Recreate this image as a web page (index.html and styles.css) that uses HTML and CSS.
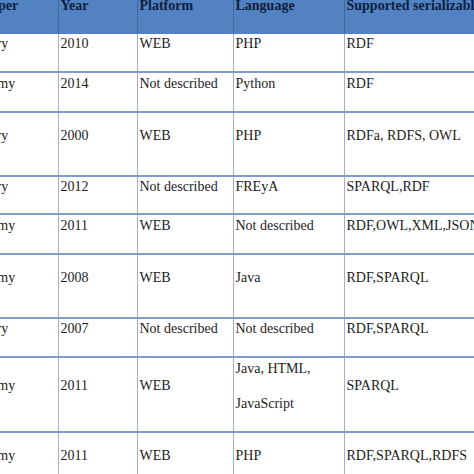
FILE: index.html
```html
<!DOCTYPE html>
<html>
<head>
<meta charset="utf-8">
<link rel="stylesheet" href="styles.css">
</head>
<body>
<table class="tbl">
  <colgroup>
    <col class="c1"><col class="c2"><col class="c3"><col class="c4"><col class="c5">
  </colgroup>
  <thead>
    <tr class="head">
      <th class="first"><p>Developer</p></th>
      <th><p>Year</p></th>
      <th><p>Platform</p></th>
      <th><p>Language</p></th>
      <th><p>Supported serializable formats</p></th>
    </tr>
  </thead>
  <tbody>
    <tr class="h38"><td><p>Industry</p></td><td><p>2010</p></td><td><p>WEB</p></td><td><p>PHP</p></td><td><p>RDF</p></td></tr>
    <tr class="h40"><td><p>Academy</p></td><td><p>2014</p></td><td><p>Not described</p></td><td><p>Python</p></td><td><p>RDF</p></td></tr>
    <tr class="h64"><td><p>Industry</p></td><td><p>2000</p></td><td><p>WEB</p></td><td><p>PHP</p></td><td><p>RDFa, RDFS, OWL</p></td></tr>
    <tr class="h38"><td><p>Industry</p></td><td><p>2012</p></td><td><p>Not described</p></td><td><p>FREyA</p></td><td><p>SPARQL,RDF</p></td></tr>
    <tr class="h40"><td><p>Academy</p></td><td><p>2011</p></td><td><p>WEB</p></td><td><p>Not described</p></td><td><p>RDF,OWL,XML,JSON</p></td></tr>
    <tr class="h64"><td><p>Academy</p></td><td><p>2008</p></td><td><p>WEB</p></td><td><p>Java</p></td><td><p>RDF,SPARQL</p></td></tr>
    <tr class="h39"><td><p>Industry</p></td><td><p>2007</p></td><td><p>Not described</p></td><td><p>Not described</p></td><td><p>RDF,SPARQL</p></td></tr>
    <tr class="h75"><td><p>Academy</p></td><td><p>2011</p></td><td><p>WEB</p></td><td><p>Java, HTML,</p><p>JavaScript</p></td><td><p>SPARQL</p></td></tr>
    <tr class="h64"><td><p>Academy</p></td><td><p>2011</p></td><td><p>WEB</p></td><td><p>PHP</p></td><td><p>RDF,SPARQL,RDFS</p></td></tr>
  </tbody>
</table>
</body>
</html>
```

FILE: styles.css
```css
html, body {
  margin: 0;
  padding: 0;
  overflow: hidden;
  background: #ffffff;
  width: 474px;
  height: 474px;
}

.tbl {
  border-collapse: collapse;
  table-layout: fixed;
  width: 585px;
  margin-left: -41px;
  margin-top: -6px;
  font-family: "Liberation Serif", "Times New Roman", serif;
  font-size: 14px;
  color: #1c1c1c;
}

.c1 { width: 99px; }
.c2 { width: 79px; }
.c3 { width: 96px; }
.c4 { width: 111px; }
.c5 { width: 200px; }

.tbl p {
  margin: 0 0 18px 0;
  line-height: 17px;
  white-space: nowrap;
}

.tbl th,
.tbl td {
  padding: 0 0 0 1.5px;
  text-align: left;
  vertical-align: middle;
  overflow: hidden;
}

.head {
  height: 40px;
  background: #5282c2;
}

.head th {
  font-weight: bold;
  color: #0e1f40;
  border-left: 1px solid #3f68a4;
}

.head th.first p {
  text-indent: -4px;
}

.tbl td {
  border-left: 1px solid #a6aec6;
  border-top: 2px solid #7f9dcb;
}

.tbl tbody tr:first-child td {
  border-top: none;
}

.h38 { height: 38px; }
.h39 { height: 39px; }
.h40 { height: 40px; }
.h64 { height: 64px; }
.h75 { height: 75px; }
```
